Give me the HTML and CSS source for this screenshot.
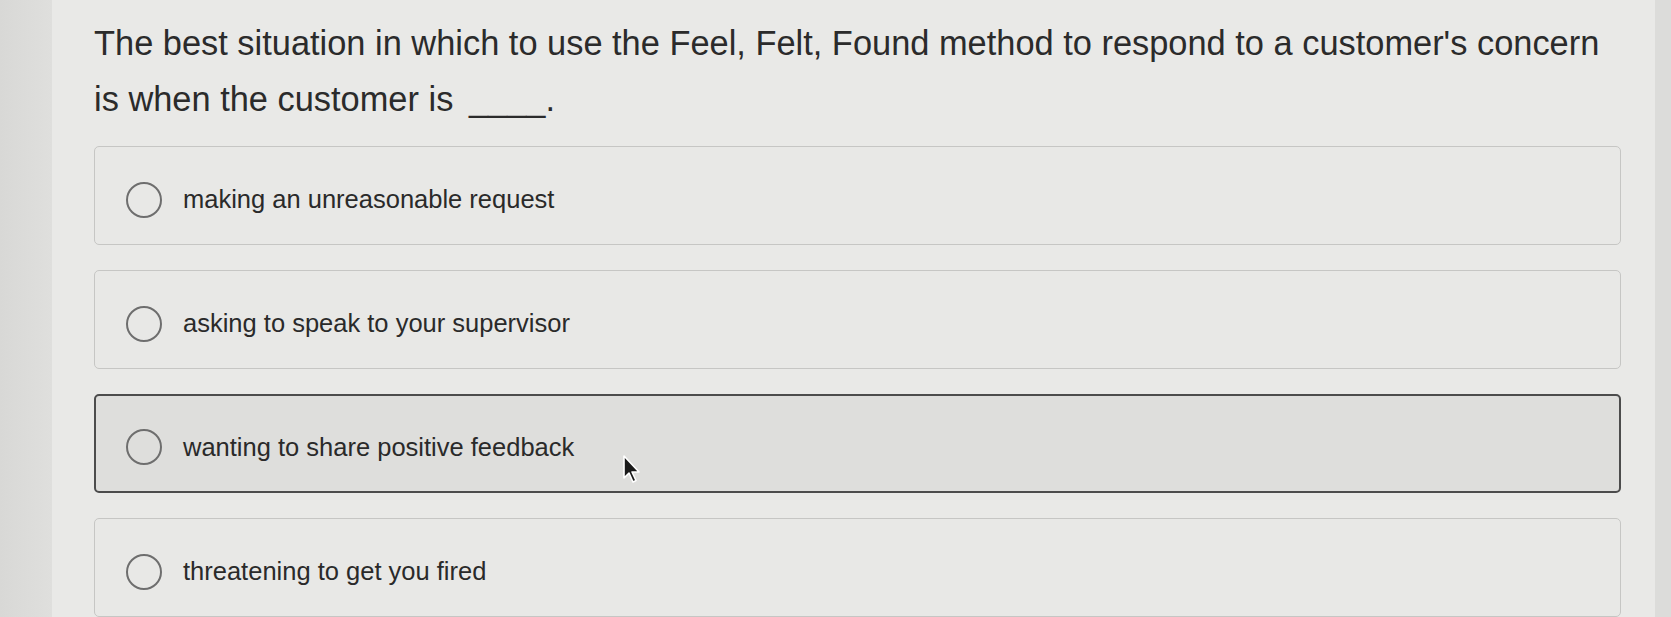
FILE: index.html
```html
<!DOCTYPE html>
<html lang="en">
<head>
    <meta charset="UTF-8">
    <title>Question</title>
    <link rel="stylesheet" href="styles.css">
</head>
<body>
    <div class="screen">
        <div class="bezel"></div>
        <main class="question">
            <p class="prompt">The best situation in which to use the Feel, Felt, Found method to respond to a customer's concern is when the customer is <span class="blank">____</span>.</p>
            <ul class="choices">
                <li class="choice"><span class="radio"></span><span class="label">making an unreasonable request</span></li>
                <li class="choice"><span class="radio"></span><span class="label">asking to speak to your supervisor</span></li>
                <li class="choice hover"><span class="radio"></span><span class="label">wanting to share positive feedback</span>
                    <svg class="cursor" width="20" height="30" viewBox="0 0 20 30">
                        <path d="M2 2 L2 24 L7 19 L11 28 L14 26.5 L10 18 L17 18 Z" fill="#1a1a1a" stroke="#fff" stroke-width="1.6" stroke-linejoin="round"/>
                    </svg>
                </li>
                <li class="choice"><span class="radio"></span><span class="label">threatening to get you fired</span></li>
            </ul>
        </main>
        <div class="edge"></div>
    </div>
</body>
</html>
```

FILE: styles.css
```css
body {
    margin: 0;
    background-color: #e6e6e4;
    font-family: 'Liberation Sans', Arial, sans-serif;
    color: #2e2e2e;
    overflow: hidden;
}

.screen {
    display: flex;
    height: 617px;
}

.bezel {
    width: 52px;
    flex-shrink: 0;
    background: linear-gradient(to right, #d8d8d6, #dfdfdd);
}

.edge {
    width: 16px;
    flex-shrink: 0;
    background-color: #dcdcda;
}

.question {
    flex: 1;
    padding: 15px 34px 0 42px;
    background-color: #e9e9e7;
}

.prompt {
    margin: 0 10px 0 0;
    font-size: 34.4px;
    line-height: 56px;
    color: #2b2b2b;
}

.blank {
    margin-left: 6px;
}

.choices {
    list-style: none;
    margin: 19px 0 0 0;
    padding: 0;
    display: flex;
    flex-direction: column;
    gap: 25px;
}

.choice {
    position: relative;
    display: flex;
    align-items: center;
    gap: 21px;
    height: 99px;
    padding: 8px 0 0 31px;
    border: 1px solid #c6c6c4;
    border-radius: 5px;
    background-color: #e8e8e6;
    box-sizing: border-box;
}

.choice.hover {
    border: 2px solid #4c4c4c;
    background-color: #dededc;
    padding: 7px 0 0 30px;
}

.radio {
    width: 36px;
    height: 36px;
    border: 2px solid #6e6e6e;
    border-radius: 50%;
    box-sizing: border-box;
    flex-shrink: 0;
}

.label {
    font-size: 25.5px;
    color: #2a2a2a;
}

.cursor {
    position: absolute;
    left: 526px;
    top: 58px;
}
```
